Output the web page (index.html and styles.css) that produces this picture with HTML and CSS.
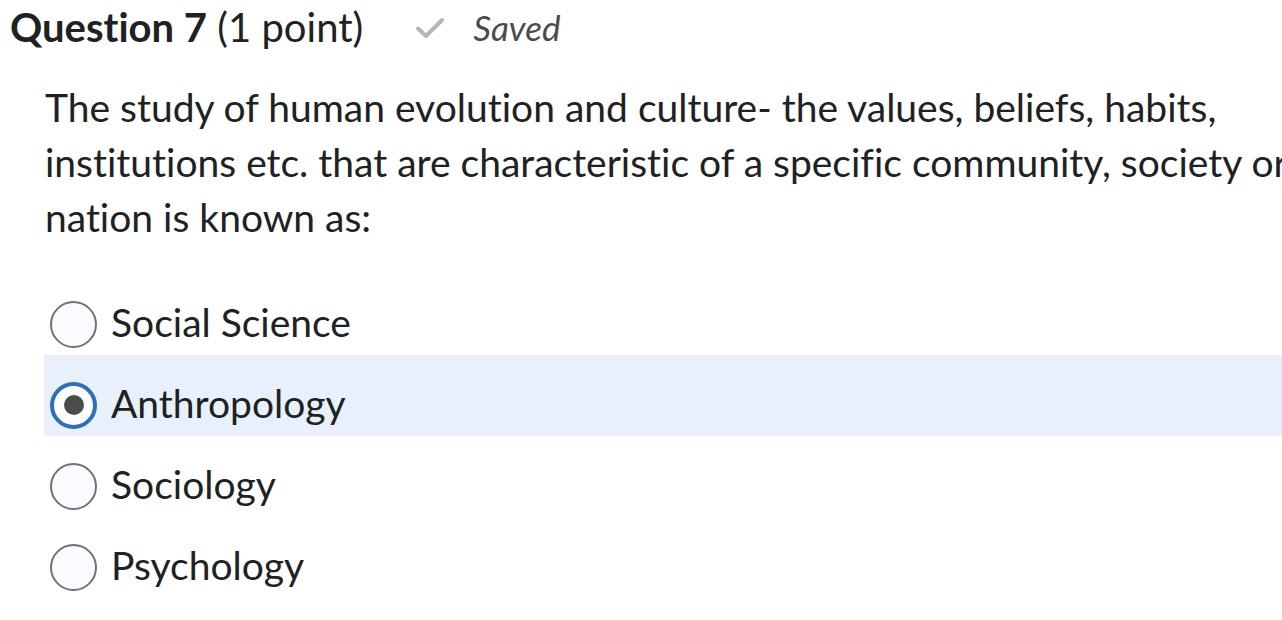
FILE: index.html
```html
<!DOCTYPE html>
<html>
<head>
<meta charset="utf-8">
<link rel="stylesheet" href="styles.css">
</head>
<body>
<div class="page">
  <div class="header">
    <h2 class="title"><strong>Question 7</strong> <span class="points">(1 point)</span></h2>
    <div class="status">
      <svg class="check" width="30" height="22" viewBox="0 0 30 22"><path d="M3 11.5 L11 19 L27 3" fill="none" stroke="#b3b6b9" stroke-width="4" stroke-linecap="round" stroke-linejoin="round"/></svg>
      <span class="saved">Saved</span>
    </div>
  </div>
  <div class="question">The study of human evolution and culture- the values, beliefs, habits, institutions etc. that are characteristic of a specific community, society or nation is known as:</div>
  <div class="options">
    <label class="option"><span class="radio"></span><span class="label">Social Science</span></label>
    <label class="option selected"><span class="radio checked"></span><span class="label">Anthropology</span></label>
    <label class="option"><span class="radio"></span><span class="label">Sociology</span></label>
    <label class="option"><span class="radio"></span><span class="label">Psychology</span></label>
  </div>
</div>
</body>
</html>
```
FILE: styles.css
```css
html, body {
  margin: 0;
  padding: 0;
  background: #ffffff;
  overflow: hidden;
}
body {
  font-family: Lato, "Noto Sans", sans-serif;
  font-variant-ligatures: none;
  color: #202122;
}
.page {
  width: 1300px;
  padding: 0 0 0 10px;
}
.header {
  display: flex;
  align-items: center;
  height: 54px;
}
.title {
  margin: 0;
  font-size: 40px;
  font-weight: 400;
  line-height: 54px;
}
.title strong {
  font-weight: 700;
}
.status {
  display: flex;
  align-items: center;
  margin-left: 52px;
}
.check {
  display: block;
  margin-top: 2px;
}
.saved {
  margin-left: 28px;
  font-size: 35px;
  font-style: italic;
  color: #494c4e;
}
.question {
  margin: 26px 0 0 35px;
  width: 1260px;
  font-size: 39px;
  line-height: 55px;
}
.options {
  margin: 29px 0 0 34px;
  display: flex;
  flex-direction: column;
}
.option {
  box-sizing: border-box;
  display: flex;
  align-items: center;
  height: 81px;
  padding: 19px 0 0 6px;
}
.option.selected {
  background: #e8f1fb;
}
.radio {
  box-sizing: border-box;
  width: 47px;
  height: 47px;
  border-radius: 50%;
  border: 2px solid #6e7376;
  background: #f9fbff;
  flex: none;
  display: flex;
  align-items: center;
  justify-content: center;
}
.radio.checked {
  border: 4px solid #2c6fbb;
  background: #ffffff;
}
.radio.checked::after {
  content: "";
  width: 20px;
  height: 20px;
  border-radius: 50%;
  background: #494c4e;
}
.label {
  margin-left: 14px;
  padding-bottom: 5px;
  font-size: 39px;
}
```
